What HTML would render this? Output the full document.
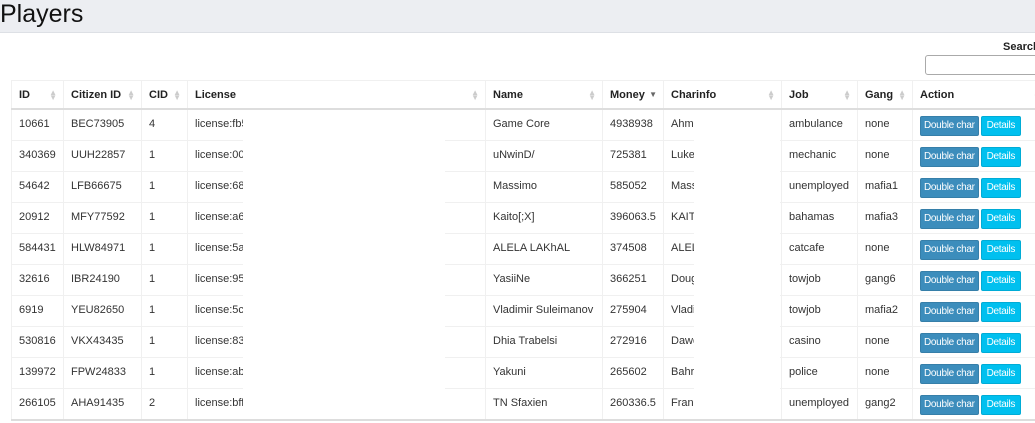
<!DOCTYPE html>
<html><head><style>
body{margin:0;width:1035px;height:423px;overflow:hidden;background:#fff;font-family:"Liberation Sans",Arial,sans-serif;position:relative}
.hdr{position:absolute;left:0;top:0;width:1035px;height:32px;background:#eceef2;border-bottom:1px solid #dde0e5}
.hdr h1{margin:0;font-weight:normal;font-size:25px;line-height:28px;position:absolute;left:0;top:0;color:#111}
.search{position:absolute;left:1003px;top:41px;font-size:11px;font-weight:bold;color:#222}
.inp{position:absolute;left:925px;top:55px;width:120px;height:18px;border:1px solid #aaa;border-radius:3px}
table{position:absolute;left:11px;top:80px;border-collapse:collapse;font-size:11px;color:#333;table-layout:fixed;width:1040px}
th,td{border:1px solid #f0f0f0;text-align:left;padding:0 7px;white-space:nowrap;overflow:hidden}
th{height:27px;font-weight:bold;color:#222;border-bottom:2px solid #ddd;position:relative}
td{height:27px;padding-bottom:3px}
th .s{position:absolute;right:6px;top:9px;font-size:8px;color:#ccc;line-height:5px}
.b1,.b2{display:inline-block;color:#fff;font-size:10px;padding:0 3px;height:18px;line-height:18px;border-radius:2px;vertical-align:middle;letter-spacing:-0.3px;position:relative;top:2px}
.b1{background:#3c8dbc;border:1px solid #367fa9}
.b2{background:#00c0ef;border:1px solid #00acd6;margin-left:2px;padding:0 5px}
tbody tr:last-child td{border-bottom:2px solid #ddd}
.w{position:absolute;background:#fff}
</style></head><body>
<div class="hdr"><h1>Players</h1></div>
<div class="search">Search</div><div class="inp"></div>
<table>
<colgroup><col style="width:52px"><col style="width:78px"><col style="width:46px"><col style="width:298px"><col style="width:117px"><col style="width:61px"><col style="width:118px"><col style="width:76px"><col style="width:55px"><col style="width:139px"></colgroup>
<thead><tr><th>ID<span class="s">▲<br>▼</span></th><th>Citizen ID<span class="s">▲<br>▼</span></th><th>CID<span class="s">▲<br>▼</span></th><th>License<span class="s">▲<br>▼</span></th><th>Name<span class="s">▲<br>▼</span></th><th>Money<span class="s" style="color:#666;top:11px">▼</span></th><th>Charinfo<span class="s">▲<br>▼</span></th><th>Job<span class="s">▲<br>▼</span></th><th>Gang<span class="s">▲<br>▼</span></th><th>Action<span class="s" style="right:10px">▲<br>▼</span></th></tr></thead>
<tbody>
<tr><td>10661</td><td>BEC73905</td><td>4</td><td>license:fb5</td><td>Game Core</td><td>4938938</td><td>Ahme</td><td>ambulance</td><td>none</td><td><span class="b1">Double char</span><span class="b2">Details</span></td></tr>
<tr><td>340369</td><td>UUH22857</td><td>1</td><td>license:002</td><td>uNwinD/</td><td>725381</td><td>Luke</td><td>mechanic</td><td>none</td><td><span class="b1">Double char</span><span class="b2">Details</span></td></tr>
<tr><td>54642</td><td>LFB66675</td><td>1</td><td>license:682</td><td>Massimo</td><td>585052</td><td>Mass</td><td>unemployed</td><td>mafia1</td><td><span class="b1">Double char</span><span class="b2">Details</span></td></tr>
<tr><td>20912</td><td>MFY77592</td><td>1</td><td>license:a66</td><td>Kaito[;X]</td><td>396063.5</td><td>KAIT</td><td>bahamas</td><td>mafia3</td><td><span class="b1">Double char</span><span class="b2">Details</span></td></tr>
<tr><td>584431</td><td>HLW84971</td><td>1</td><td>license:5a2</td><td>ALELA LAKhAL</td><td>374508</td><td>ALEL</td><td>catcafe</td><td>none</td><td><span class="b1">Double char</span><span class="b2">Details</span></td></tr>
<tr><td>32616</td><td>IBR24190</td><td>1</td><td>license:953</td><td>YasiiNe</td><td>366251</td><td>Doug</td><td>towjob</td><td>gang6</td><td><span class="b1">Double char</span><span class="b2">Details</span></td></tr>
<tr><td>6919</td><td>YEU82650</td><td>1</td><td>license:5c3</td><td>Vladimir Suleimanov</td><td>275904</td><td>Vladi</td><td>towjob</td><td>mafia2</td><td><span class="b1">Double char</span><span class="b2">Details</span></td></tr>
<tr><td>530816</td><td>VKX43435</td><td>1</td><td>license:83f</td><td>Dhia Trabelsi</td><td>272916</td><td>Dawo</td><td>casino</td><td>none</td><td><span class="b1">Double char</span><span class="b2">Details</span></td></tr>
<tr><td>139972</td><td>FPW24833</td><td>1</td><td>license:abe</td><td>Yakuni</td><td>265602</td><td>Bahri</td><td>police</td><td>none</td><td><span class="b1">Double char</span><span class="b2">Details</span></td></tr>
<tr><td>266105</td><td>AHA91435</td><td>2</td><td>license:bff8</td><td>TN Sfaxien</td><td>260336.5</td><td>Frank</td><td>unemployed</td><td>gang2</td><td><span class="b1">Double char</span><span class="b2">Details</span></td></tr>
</tbody></table>
<div class="w" style="left:243px;top:111px;width:202px;height:305px"></div>
<div class="w" style="left:694px;top:111px;width:86px;height:305px"></div>
</body></html>
